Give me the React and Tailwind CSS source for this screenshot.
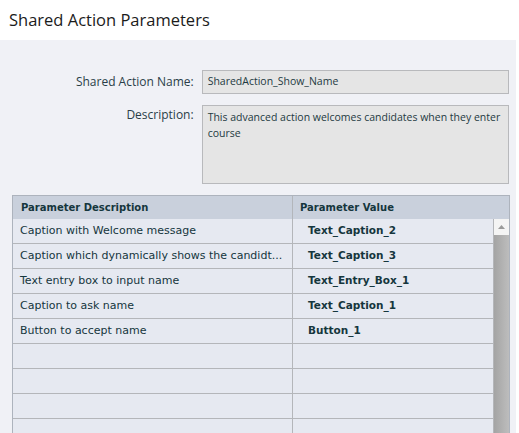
const ROWS = [
  { desc: 'Caption with Welcome message', value: 'Text_Caption_2' },
  { desc: 'Caption which dynamically shows the candidt...', value: 'Text_Caption_3' },
  { desc: 'Text entry box to input name', value: 'Text_Entry_Box_1' },
  { desc: 'Caption to ask name', value: 'Text_Caption_1' },
  { desc: 'Button to accept name', value: 'Button_1' },
  { desc: '', value: '' },
  { desc: '', value: '' },
  { desc: '', value: '' },
  { desc: '', value: '' },
]

const uiFont = { fontFamily: "'Open Sans', 'Noto Sans', sans-serif" }
const tableFont = { fontFamily: "'DejaVu Sans', Verdana, sans-serif" }

export default function App() {
  return (
    <div className="w-[519px] h-[433px] overflow-hidden bg-white flex flex-col" style={uiFont}>
      {/* Title bar */}
      <div className="h-[40px] shrink-0 flex items-center px-[9px]">
        <h1 className="text-[16.5px] text-[#1b1b1b] leading-none">Shared Action Parameters</h1>
      </div>

      <div className="flex-1 bg-[#f0f1f6] mr-[3px] pl-3 pr-[7px] pt-[30px]">
        {/* Form */}
        <div className="flex items-center gap-2">
          <label className="w-[182px] text-right text-[12px] text-[#2a3e48]">Shared Action Name:</label>
          <div className="w-[308px] h-[24px] border border-[#b8b9bc] bg-[#e5e5e5] px-[5px] flex items-center text-[10.5px] text-[#1e3a42]">
            SharedAction_Show_Name
          </div>
        </div>

        <div className="flex gap-2 mt-[11px]">
          <label className="w-[182px] text-right text-[12px] text-[#2a3e48] pt-[1px]">Description:</label>
          <div className="w-[308px] h-[79px] border border-[#b8b9bc] bg-[#e5e5e5] px-[5px] pt-[3px] text-[10.5px] leading-[16px] text-[#1e3a42]">
            This advanced action welcomes candidates when they enter course
          </div>
        </div>

        {/* Table */}
        <div className="mt-[11px] w-[498px] border border-[#adb3bd] text-[#15363d]" style={tableFont}>
          <div className="flex h-[23px] bg-[#c9d0dc] text-[10px] font-bold">
            <div className="w-[280px] border-r border-[#b3b6bb] pl-[8px] flex items-center">Parameter Description</div>
            <div className="flex-1 pl-[7px] flex items-center">Parameter Value</div>
          </div>
          <div className="flex">
            <div className="flex-1">
              {ROWS.map((r, i) => (
                <div key={i} className="flex h-[25px] border-b border-[#b4b6ba] bg-[#e6e9f1] text-[11px]">
                  <div className="w-[280px] border-r border-[#b4b6ba] pl-[7px] flex items-center whitespace-nowrap overflow-hidden">{r.desc}</div>
                  <div className="flex-1 pl-[15px] flex items-center font-bold text-[10.5px]">{r.value}</div>
                </div>
              ))}
            </div>
            {/* Scrollbar */}
            <div className="w-[16px] flex flex-col border-l border-[#b4b6ba]">
              <div className="h-[16px] bg-[#f4f4f4] flex items-center justify-center">
                <svg width="7" height="4" viewBox="0 0 7 4"><path d="M3.5 0 L7 4 L0 4 Z" fill="#9a9a9a" /></svg>
              </div>
              <div className="flex-1 bg-gradient-to-r from-[#a4a4a4] to-[#bdbdbd]" />
            </div>
          </div>
        </div>
      </div>
    </div>
  )
}
